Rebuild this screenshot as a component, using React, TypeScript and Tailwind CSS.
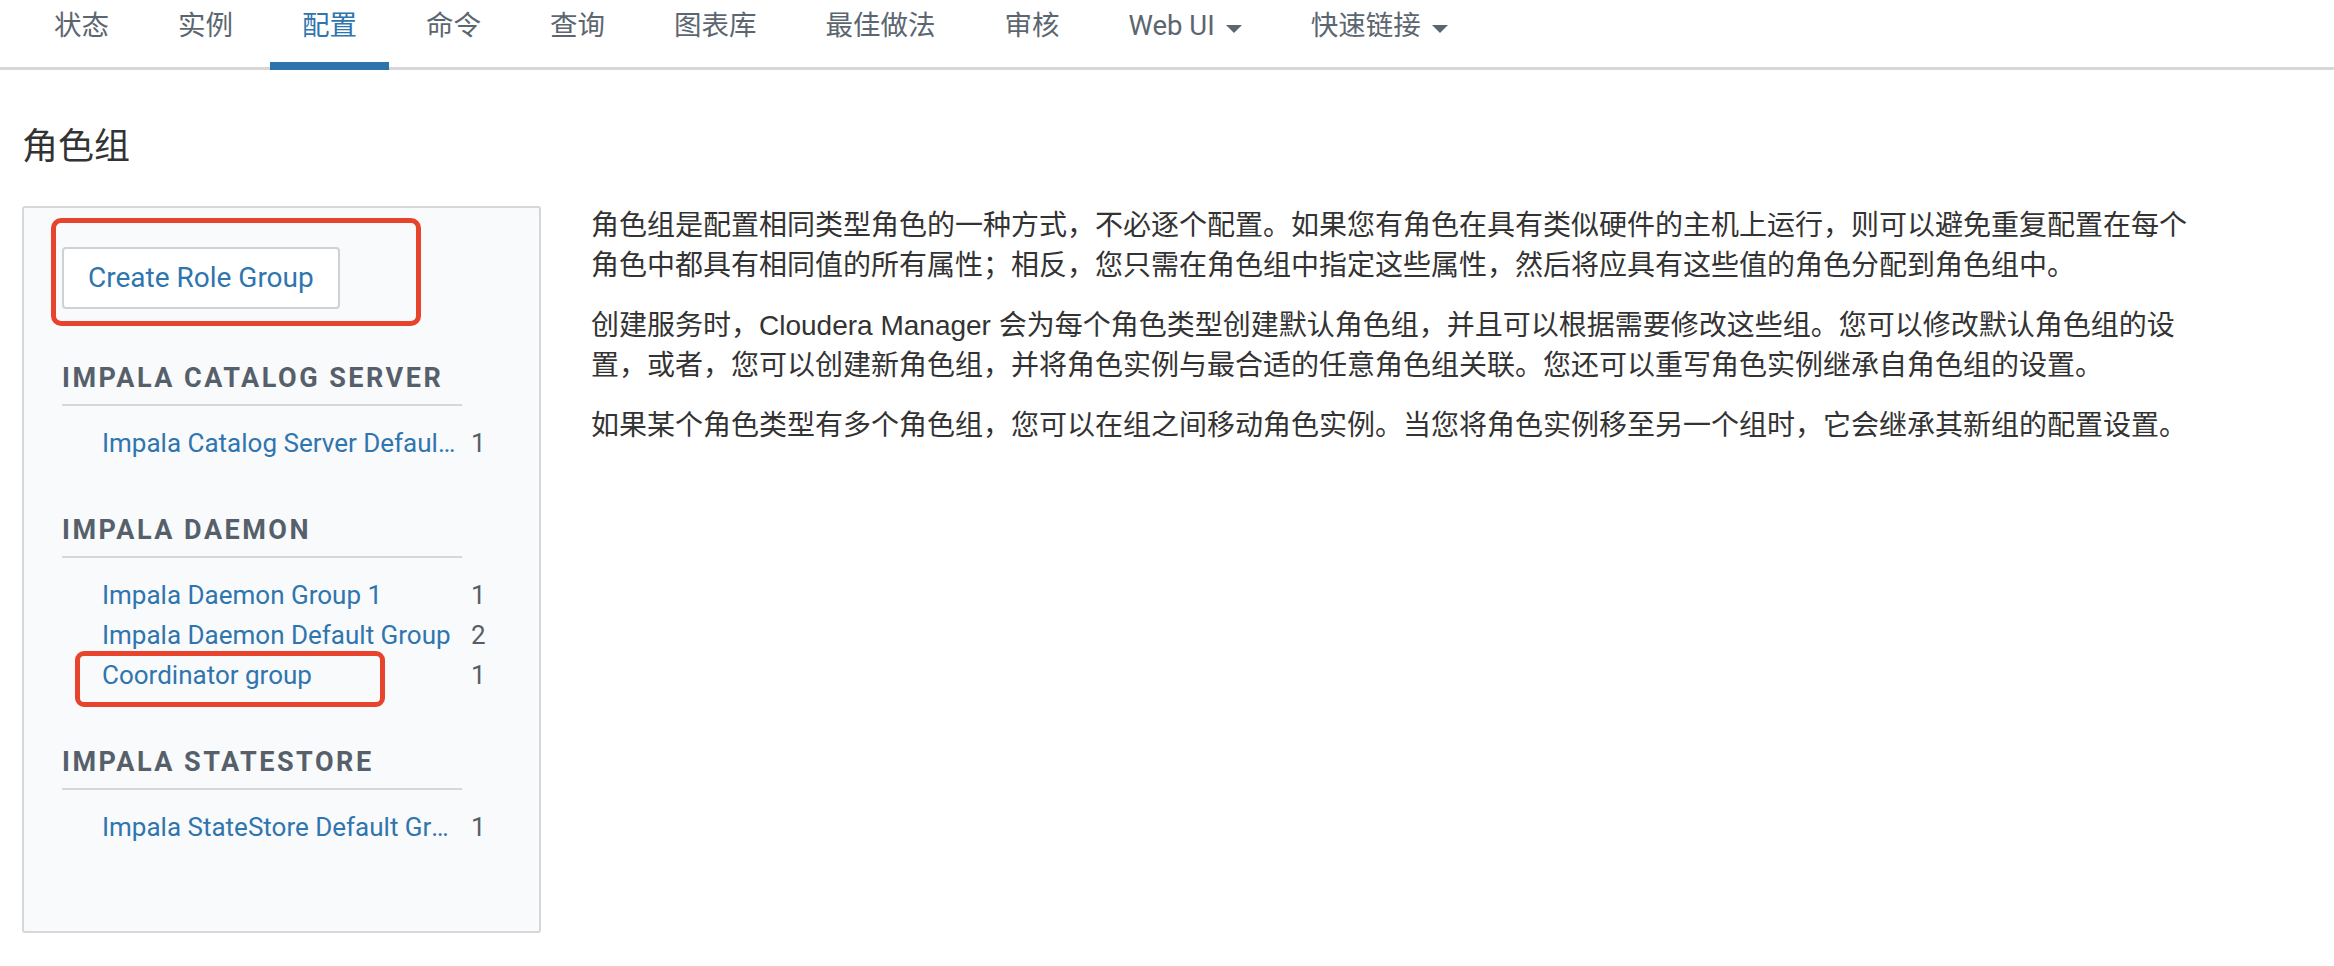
import React from "react";

const tabs = [
  { label: "状态" },
  { label: "实例" },
  { label: "配置", active: true },
  { label: "命令" },
  { label: "查询" },
  { label: "图表库" },
  { label: "最佳做法" },
  { label: "审核" },
  { label: "Web UI", caret: true },
  { label: "快速链接", caret: true },
];

const groups = [
  {
    title: "IMPALA CATALOG SERVER",
    items: [{ name: "Impala Catalog Server Default Group", count: 1 }],
  },
  {
    title: "IMPALA DAEMON",
    items: [
      { name: "Impala Daemon Group 1", count: 1 },
      { name: "Impala Daemon Default Group", count: 2 },
      { name: "Coordinator group", count: 1, marked: true },
    ],
  },
  {
    title: "IMPALA STATESTORE",
    items: [{ name: "Impala StateStore Default Group", count: 1 }],
  },
];

const font = "font-['Roboto','Noto_Sans_CJK_SC',sans-serif]";

export default function App() {
  return (
    <div className={`min-h-screen bg-white ${font}`}>
      {/* top tabs */}
      <nav className="flex h-[70px] gap-[5px] border-b-[3px] border-[#d7d7da] pl-[22px]">
        {tabs.map((t) => (
          <div
            key={t.label}
            className={`-mb-[3px] flex h-[70px] items-start px-[32px] pt-[6px] text-[27.5px] leading-[40px] ${
              t.active
                ? "border-b-[8px] border-[#2e74ac] text-[#2f75ae]"
                : "text-[#5c6670]"
            }`}
          >
            <span>{t.label}</span>
            {t.caret && (
              <span className="ml-[11px] mt-[19px] h-0 w-0 border-x-[8px] border-t-[8px] border-x-transparent border-t-[#5c6670]" />
            )}
          </div>
        ))}
      </nav>

      <div className="px-[22px]">
        <h2 className="mt-[57px] text-[36px] leading-[40px] text-[#333]">角色组</h2>

        <div className="mt-[39px] flex items-start">
          {/* role groups panel */}
          <aside className="relative h-[727px] w-[519px] shrink-0 rounded-[3px] border-2 border-[#d6d7da] bg-[#f9fafc] pl-[38px] pt-[39px]">
            <button className="h-[62px] rounded-[4px] border-2 border-[#cfd1d4] bg-white px-[24px] text-[28px] leading-[40px] text-[#2f75ae]">
              Create Role Group
            </button>
            <div className="pointer-events-none absolute left-[27px] top-[10px] h-[108px] w-[370px] rounded-[10px] border-[5px] border-[#e8432d]" />

            <div className="mt-[49px] flex w-[400px] flex-col gap-[47px]">
              {groups.map((g) => (
                <section key={g.title}>
                  <h3 className="border-b-[2px] border-[#d6d7da] pb-[6px] text-[27px] font-bold leading-[40px] tracking-[2.5px] text-[#56606a]">
                    {g.title}
                  </h3>
                  <ul className="mt-[17px]">
                    {g.items.map((it) => (
                      <li key={it.name} className="relative flex pl-[40px] text-[26px] leading-[40px]">
                        <span className="w-[357px] shrink-0 truncate text-[#2f75ae]">{it.name}</span>
                        <span className="ml-[12px] text-[#555e67]">{it.count}</span>
                        {it.marked && (
                          <div className="pointer-events-none absolute -top-[4px] left-[13px] h-[56px] w-[310px] rounded-[9px] border-[5px] border-[#e8432d]" />
                        )}
                      </li>
                    ))}
                  </ul>
                </section>
              ))}
            </div>
          </aside>

          {/* description */}
          <div className="ml-[50px] w-[1600px] shrink-0 font-['Liberation_Sans','Noto_Sans_CJK_SC',sans-serif] text-[28px] leading-[40px] text-[#333]">
            <p>
              角色组是配置相同类型角色的一种方式，不必逐个配置。如果您有角色在具有类似硬件的主机上运行，则可以避免重复配置在每个角色中都具有相同值的所有属性；相反，您只需在角色组中指定这些属性，然后将应具有这些值的角色分配到角色组中。
            </p>
            <p className="mt-[20px]">
              创建服务时，Cloudera Manager 会为每个角色类型创建默认角色组，并且可以根据需要修改这些组。您可以修改默认角色组的设置，或者，您可以创建新角色组，并将角色实例与最合适的任意角色组关联。您还可以重写角色实例继承自角色组的设置。
            </p>
            <p className="mt-[20px]">
              如果某个角色类型有多个角色组，您可以在组之间移动角色实例。当您将角色实例移至另一个组时，它会继承其新组的配置设置。
            </p>
          </div>
        </div>
      </div>
    </div>
  );
}
